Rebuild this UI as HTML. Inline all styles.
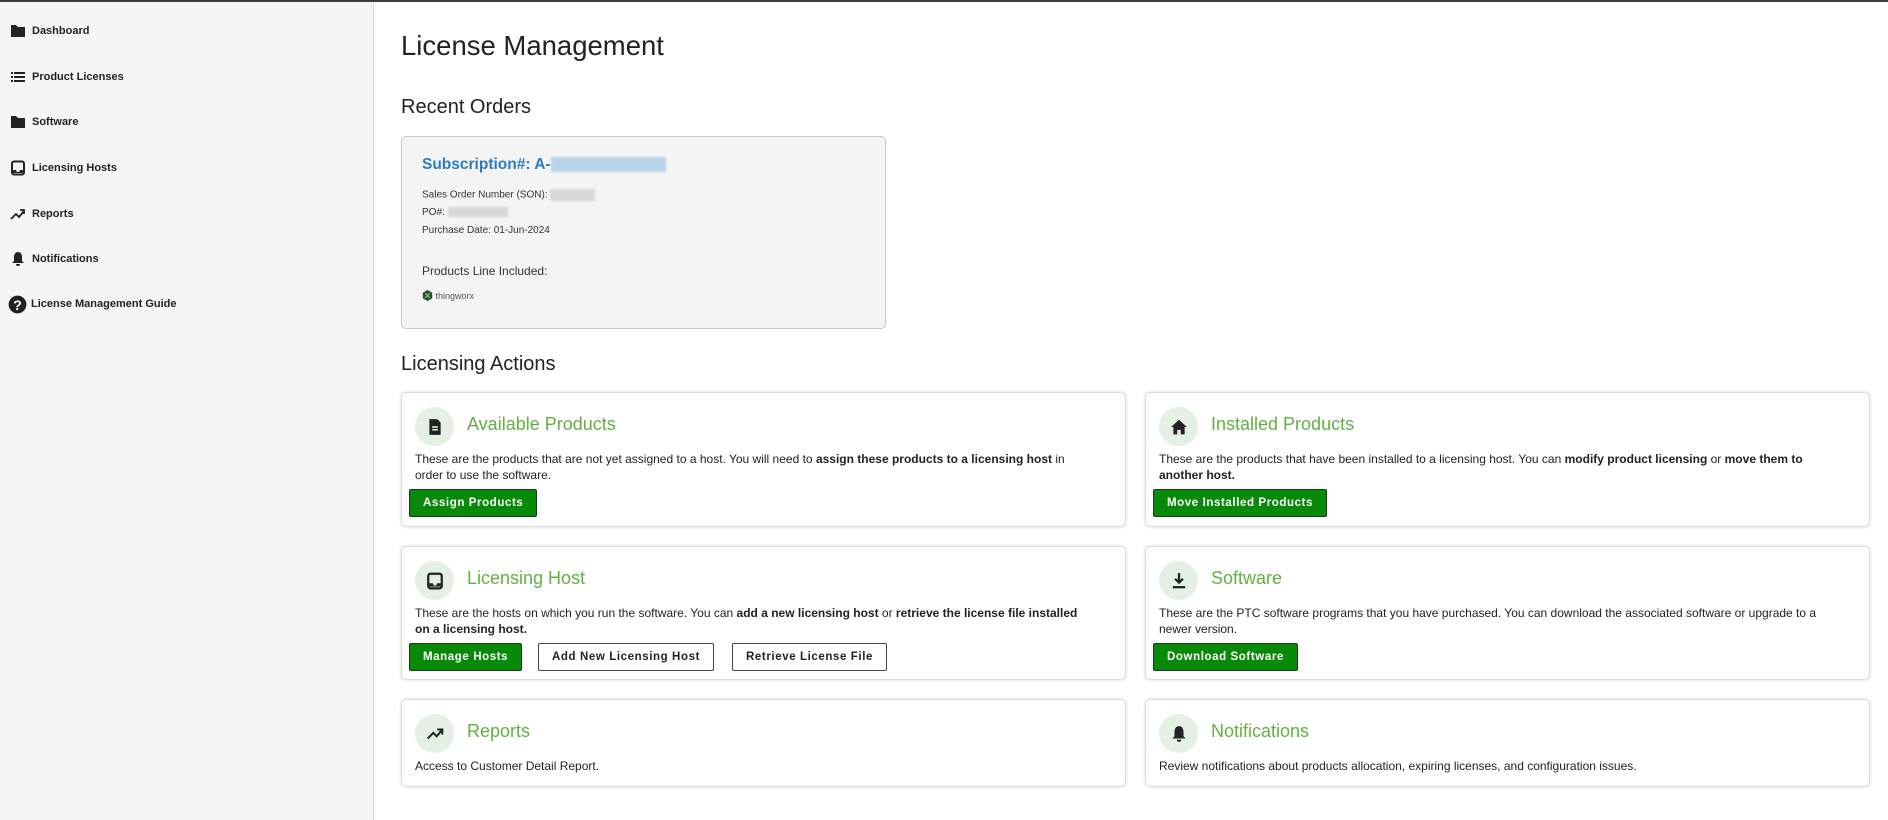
<!DOCTYPE html>
<html><head><meta charset="utf-8"><style>
*{box-sizing:border-box;margin:0;padding:0}
body{width:1888px;height:818px;overflow:hidden;background:#fff;font-family:"Liberation Sans",sans-serif;color:#222;position:relative;border-top:2px solid #3a3f44}
.side{position:absolute;left:0;top:0;width:374px;height:818px;background:#f5f5f5;border-right:1px solid #d8d8d8}
.nav{position:absolute;left:10px;font-size:11px;font-weight:bold;color:#222;display:flex;align-items:center;height:20px}
.nav svg{width:16px;height:16px;margin-right:6px}
h1{position:absolute;left:401px;top:28px;font-size:27.5px;font-weight:normal;color:#222}
h2{position:absolute;left:401px;font-size:20px;font-weight:normal;color:#222}
.order{position:absolute;left:401px;top:134px;width:485px;height:193px;background:#f4f4f4;border:1px solid #c8c8c8;border-radius:5px}
.order .sub{position:absolute;left:20px;top:19px;font-size:15.5px;font-weight:bold;color:#2d7bbf}
.order .l{position:absolute;left:20px;font-size:10px;color:#333}
.blur{display:inline-block;background:#d8d8d8;filter:blur(1px);vertical-align:middle}
.card{position:absolute;width:725px;background:#fff;border:1px solid #dcdcdc;border-radius:5px;box-shadow:0 0 3px rgba(0,0,0,.15)}
.card .ic{position:absolute;left:13px;top:14px;width:39px;height:39px;border-radius:50%;background:#e3f0e3;display:flex;align-items:center;justify-content:center}
.card .ic svg{width:18px;height:18px}
.card .t{position:absolute;left:65px;top:21px;font-size:18px;color:#62b041}
.card .d{position:absolute;left:13px;top:58px;right:40px;font-size:12px;line-height:16px;color:#222}
.btn{position:absolute;top:96px;height:28px;padding:0 13px;font-size:11.5px;font-weight:bold;letter-spacing:.6px;line-height:26px;border:1px solid #1e3a1e;border-radius:2px;background:#078a07;color:#fff;white-space:nowrap}
.btn.w{background:#fff;color:#222;border-color:#444}
</style></head><body>
<div class="side">
<div class="nav" style="top:19px"><svg viewBox="0 0 16 16"><path d="M1 2h5l2 2h7v10H1z" fill="#222"/></svg>Dashboard</div>
<div class="nav" style="top:65px"><svg viewBox="0 0 16 16" fill="#222"><rect x="1" y="3" width="2" height="2"/><rect x="1" y="7" width="2" height="2"/><rect x="1" y="11" width="2" height="2"/><rect x="4" y="3" width="11" height="2"/><rect x="4" y="7" width="11" height="2"/><rect x="4" y="11" width="11" height="2"/></svg>Product Licenses</div>
<div class="nav" style="top:110px"><svg viewBox="0 0 16 16"><path d="M1 2h5l2 2h7v10H1z" fill="#222"/></svg>Software</div>
<div class="nav" style="top:156px"><svg viewBox="0 0 16 16"><rect x="2" y="1.5" width="12" height="13" rx="2" fill="none" stroke="#222" stroke-width="2"/><path d="M3 10h3l1 2h2l1-2h3v3H3z" fill="#222"/></svg>Licensing Hosts</div>
<div class="nav" style="top:202px"><svg viewBox="0 0 16 16"><path d="M1 13l5-5 3 3 5-6M10 4h4v4" fill="none" stroke="#222" stroke-width="1.8"/></svg>Reports</div>
<div class="nav" style="top:247px"><svg viewBox="0 0 16 16"><path d="M8 1c-3 0-4 3-4 5v4l-2 2h12l-2-2V6c0-2-1-5-4-5zM6 13a2 2 0 004 0z" fill="#222"/></svg>Notifications</div>
<div class="nav" style="top:292px;left:8px"><svg viewBox="0 0 16 16" style="width:19px;height:19px;margin-right:4px"><circle cx="8" cy="8" r="7.5" fill="#222"/><text x="8" y="12.5" font-size="12" font-weight="bold" fill="#fff" text-anchor="middle" font-family="Liberation Sans">?</text></svg>License Management Guide</div>
</div>
<h1>License Management</h1>
<h2 style="top:94px">Recent Orders</h2>
<div class="order">
<div class="sub">Subscription#: A-<span class="blur" style="width:115px;height:15px;background:#b8d4ea"></span></div>
<div class="l" style="top:52px">Sales Order Number (SON): <span class="blur" style="width:45px;height:12px"></span></div>
<div class="l" style="top:70px">PO#: <span class="blur" style="width:60px;height:10px"></span></div>
<div class="l" style="top:88px">Purchase Date: 01-Jun-2024</div>
<div class="l" style="top:127px;font-size:12px">Products Line Included:</div>
<div class="l" style="top:153px;font-size:9px;color:#555;display:flex;align-items:center"><svg width="11" height="11" viewBox="0 0 10 10"><path d="M5 0l4.3 2.5v5L5 10 .7 7.5v-5z" fill="#2c4a2c"/><path d="M3 3l4 4M7 3l-4 4" stroke="#6c6" stroke-width="1.3"/></svg>&nbsp;thingworx</div>
</div>
<h2 style="top:351px">Licensing Actions</h2>

<div class="card" style="left:401px;top:390px;height:135px">
<div class="ic"><svg viewBox="0 0 16 16"><path d="M3 1h7l3 3v11H3z" fill="#222"/><path d="M5.5 8h5M5.5 10.5h5" stroke="#fff" stroke-width="1.3"/></svg></div>
<div class="t">Available Products</div>
<div class="d">These are the products that are not yet assigned to a host. You will need to <b>assign these products to a licensing host</b> in order to use the software.</div>
<div class="btn" style="left:7px">Assign Products</div></div>

<div class="card" style="left:1145px;top:390px;height:135px">
<div class="ic"><svg viewBox="0 0 16 16"><path d="M8 1.5L1 8h2v6.5h3.5v-4h3v4H13V8h2z" fill="#222"/></svg></div>
<div class="t">Installed Products</div>
<div class="d">These are the products that have been installed to a licensing host. You can <b>modify product licensing</b> or <b>move them to another host.</b></div>
<div class="btn" style="left:7px">Move Installed Products</div></div>

<div class="card" style="left:401px;top:544px;height:134px">
<div class="ic"><svg viewBox="0 0 16 16"><rect x="2" y="1.5" width="12" height="13" rx="2" fill="none" stroke="#222" stroke-width="2"/><path d="M3 10h3l1 2h2l1-2h3v3H3z" fill="#222"/></svg></div>
<div class="t">Licensing Host</div>
<div class="d">These are the hosts on which you run the software. You can <b>add a new licensing host</b> or <b>retrieve the license file installed on a licensing host.</b></div>
<div class="btn" style="left:7px">Manage Hosts</div>
<div class="btn w" style="left:136px">Add New Licensing Host</div>
<div class="btn w" style="left:330px">Retrieve License File</div></div>

<div class="card" style="left:1145px;top:544px;height:134px">
<div class="ic"><svg viewBox="0 0 16 16"><path d="M8 1v8M4.5 6L8 9.5 11.5 6" fill="none" stroke="#222" stroke-width="2"/><rect x="2.5" y="12.5" width="11" height="2" fill="#222"/></svg></div>
<div class="t">Software</div>
<div class="d">These are the PTC software programs that you have purchased. You can download the associated software or upgrade to a newer version.</div>
<div class="btn" style="left:7px">Download Software</div></div>

<div class="card" style="left:401px;top:697px;height:88px">
<div class="ic"><svg viewBox="0 0 16 16"><path d="M1.5 12l5-5 3 3 5-6M10 4h4.5v4.5" fill="none" stroke="#222" stroke-width="1.8"/></svg></div>
<div class="t">Reports</div>
<div class="d">Access to Customer Detail Report.</div></div>

<div class="card" style="left:1145px;top:697px;height:88px">
<div class="ic"><svg viewBox="0 0 16 16"><path d="M8 1c-3 0-4 3-4 5v4l-2 2h12l-2-2V6c0-2-1-5-4-5zM6 13a2 2 0 004 0z" fill="#222"/></svg></div>
<div class="t">Notifications</div>
<div class="d">Review notifications about products allocation, expiring licenses, and configuration issues.</div></div>
</body></html>
